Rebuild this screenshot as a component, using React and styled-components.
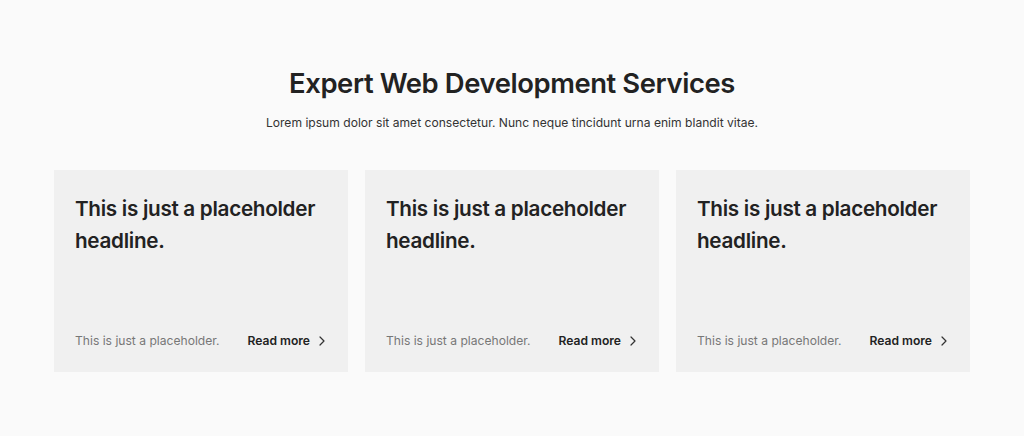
import React from 'react';
import styled, { createGlobalStyle } from 'styled-components';

const GlobalStyle = createGlobalStyle`
  body {
    margin: 0;
    background: #fafafa;
    font-family: 'Inter', 'Liberation Sans', sans-serif;
    color: #222;
  }
`;

const Section = styled.section`
  padding: 63px 54px 64px;
  display: flex;
  flex-direction: column;
  align-items: center;
`;

const Title = styled.h2`
  margin: 0;
  font-size: 27.4px;
  line-height: 40px;
  font-weight: 600;
  letter-spacing: -0.4px;
  color: #222;
`;

const Subtitle = styled.p`
  margin: 10px 0 0;
  font-size: 12.1px;
  line-height: 20px;
  color: #333;
`;

const Grid = styled.div`
  margin-top: 37px;
  width: 100%;
  display: grid;
  grid-template-columns: repeat(3, 1fr);
  gap: 17px;
`;

const Card = styled.div`
  background: #f0f0f0;
  height: 202px;
  box-sizing: border-box;
  padding: 23px 21px 21px;
  display: flex;
  flex-direction: column;
  justify-content: space-between;
`;

const Headline = styled.h3`
  margin: 0;
  font-size: 20.7px;
  line-height: 32px;
  font-weight: 600;
  letter-spacing: -0.3px;
  color: #222;
`;

const Footer = styled.div`
  display: flex;
  align-items: center;
  justify-content: space-between;
  font-size: 12.1px;
  line-height: 20px;
`;

const Note = styled.span`
  color: #777;
`;

const ReadMore = styled.a`
  display: flex;
  align-items: center;
  gap: 7px;
  font-weight: 600;
  color: #222;
  text-decoration: none;
`;

const Chevron = () => (
  <svg width="10" height="10" viewBox="0 0 10 10" fill="none">
    <path d="M3 1l4 4-4 4" stroke="#333" strokeWidth="1.2" strokeLinecap="round" strokeLinejoin="round" />
  </svg>
);

const cards = [1, 2, 3];

function App() {
  return (
    <>
      <GlobalStyle />
      <Section>
        <Title>Expert Web Development Services</Title>
        <Subtitle>Lorem ipsum dolor sit amet consectetur. Nunc neque tincidunt urna enim blandit vitae.</Subtitle>
        <Grid>
          {cards.map((id) => (
            <Card key={id}>
              <Headline>This is just a placeholder headline.</Headline>
              <Footer>
                <Note>This is just a placeholder.</Note>
                <ReadMore href="#">
                  Read more <Chevron />
                </ReadMore>
              </Footer>
            </Card>
          ))}
        </Grid>
      </Section>
    </>
  );
}

export default App;
